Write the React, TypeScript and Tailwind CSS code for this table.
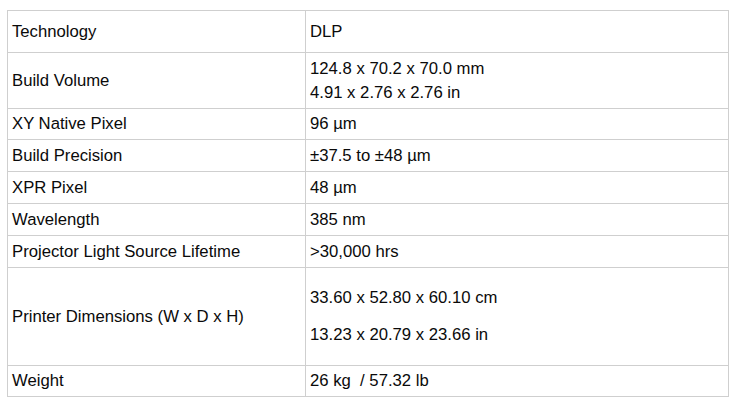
const rows: { label: string; value: React.ReactNode; h: string }[] = [
  { label: 'Technology', value: 'DLP', h: 'h-[42px]' },
  {
    label: 'Build Volume',
    value: (
      <>
        124.8 x 70.2 x 70.0 mm
        <br />
        4.91 x 2.76 x 2.76 in
      </>
    ),
    h: 'h-[56px]',
  },
  { label: 'XY Native Pixel', value: '96 µm', h: 'h-[31px]' },
  { label: 'Build Precision', value: '±37.5 to ±48 µm', h: 'h-[32px]' },
  { label: 'XPR Pixel', value: '48 µm', h: 'h-[32px]' },
  { label: 'Wavelength', value: '385 nm', h: 'h-[32px]' },
  { label: 'Projector Light Source Lifetime', value: '>30,000 hrs', h: 'h-[32px]' },
  {
    label: 'Printer Dimensions (W x D x H)',
    value: (
      <div className="flex flex-col gap-[13px]">
        <p>33.60 x 52.80 x 60.10 cm</p>
        <p>13.23 x 20.79 x 23.66 in</p>
      </div>
    ),
    h: 'h-[98px]',
  },
  { label: 'Weight', value: <>26 kg&nbsp; / 57.32 lb</>, h: 'h-[31px]' },
];

export default function App() {
  return (
    <div className="min-h-[406px] bg-white pl-[7px] pt-[10px] font-['Liberation_Sans',Arial,sans-serif] text-[16.7px] leading-6 text-[#0a0a0a]">
      <table className="w-[722px] border-collapse">
        <tbody>
          {rows.map((r) => (
            <tr key={r.label} className={r.h}>
              <td className="w-[298px] border border-[#cfcfcf] px-1 py-0 align-middle">{r.label}</td>
              <td className="border border-[#cfcfcf] px-1 py-0 align-middle">{r.value}</td>
            </tr>
          ))}
        </tbody>
      </table>
    </div>
  );
}
